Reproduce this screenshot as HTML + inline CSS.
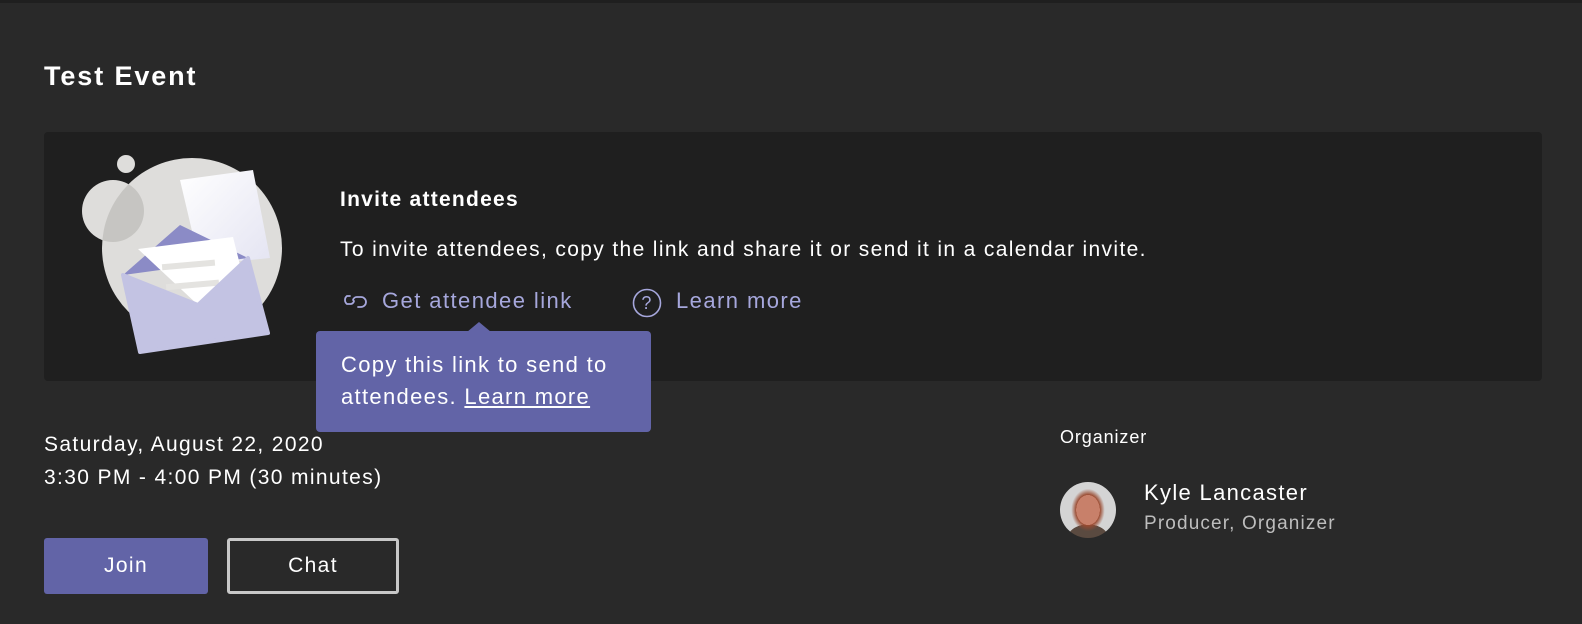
<!DOCTYPE html>
<html><head><style>
body{margin:0;width:1582px;height:624px;background:#292929;font-family:"Segoe UI","Liberation Sans",sans-serif;color:#fff;position:relative;overflow:hidden;letter-spacing:0.085em}
.top{position:absolute;left:0;top:0;width:1582px;height:3px;background:#1f1f1f}
.abs{position:absolute;white-space:nowrap}
.card{left:44px;top:132px;width:1498px;height:249px;background:#1f1f1f;border-radius:4px}
.lnk{color:#a6a7dc;font-size:22px;letter-spacing:0.065em}
.btn{height:56px;border-radius:3px;font-size:21px;display:flex;align-items:center;justify-content:center;box-sizing:border-box}
</style></head><body>
<div class="top"></div>
<div class="abs" style="left:44px;top:61px;font-size:27px;font-weight:bold;letter-spacing:0.07em">Test Event</div>
<div class="abs card"></div>
<svg class="abs" style="left:60px;top:140px" width="260" height="230" viewBox="0 0 260 230">
<defs><linearGradient id="g" x1="0" y1="0" x2="1" y2="1"><stop offset="0" stop-color="#fff"/><stop offset="1" stop-color="#e4e4f2"/></linearGradient>
<clipPath id="c"><circle cx="132" cy="108" r="90"/></clipPath></defs>
<circle cx="132" cy="108" r="90" fill="#dedddb"/>
<circle cx="66" cy="24" r="9" fill="#dedddb"/>
<circle cx="53" cy="71" r="31" fill="#dedddb"/>
<circle cx="53" cy="71" r="31" fill="#c6c5c2" clip-path="url(#c)"/>
<polygon points="120,40 193,30 210,118 140,125" fill="url(#g)"/>
<polygon points="63,135 120,85 188,118" fill="#8b8bc6"/>
<polygon points="78,109 173,97 180,125 138,165" fill="#fff"/>
<rect x="102" y="122" width="53" height="6" fill="#e4e3e0" transform="rotate(-5 128 125)"/>
<rect x="106" y="142" width="53" height="6" fill="#e4e3e0" transform="rotate(-5 132 145)"/>
<polygon points="63,135 138,165 188,118 208,193 80,212" fill="#c3c3e3" stroke="#c3c3e3" stroke-linejoin="round" stroke-width="4"/>
</svg>
<div class="abs" style="left:340px;top:188px;font-size:21px;font-weight:bold;letter-spacing:0.06em">Invite attendees</div>
<div class="abs" style="left:340px;top:238px;font-size:21px">To invite attendees, copy the link and share it or send it in a calendar invite.</div>
<svg class="abs" style="left:340px;top:290px" width="30" height="26" viewBox="0 0 30 26" fill="none" stroke="#a6a7dc" stroke-width="1.8" stroke-linecap="round"><path d="M10 6 L7 6 a5 5 0 0 0 0 8 h4 a4 4 0 0 0 3 -3 M13 10 a4 4 0 0 1 4 -3 h4 a5 5 0 0 1 0 10 h-3"/></svg>
<div class="abs lnk" style="left:382px;top:288px">Get attendee link</div>
<svg class="abs" style="left:632px;top:288px" width="30" height="30" viewBox="0 0 30 30" fill="none" stroke="#a6a7dc" stroke-width="1.6"><circle cx="15" cy="15" r="13.5"/><text x="15" y="21" fill="#a6a7dc" stroke="none" font-size="18" text-anchor="middle" font-family="Liberation Sans">?</text></svg>
<div class="abs lnk" style="left:676px;top:288px">Learn more</div>
<div class="abs" style="left:316px;top:331px;width:335px;height:101px;background:#6264a7;border-radius:4px"></div>
<div class="abs" style="left:467px;top:322px;width:0;height:0;border-left:12px solid transparent;border-right:12px solid transparent;border-bottom:10px solid #6264a7"></div>
<div class="abs" style="left:341px;top:349px;font-size:22px;line-height:32px;letter-spacing:0.06em">Copy this link to send to<br>attendees. <u>Learn more</u></div>
<div class="abs" style="left:44px;top:428px;font-size:21px;line-height:33px">Saturday, August 22, 2020<br>3:30 PM - 4:00 PM (30 minutes)</div>
<div class="abs btn" style="left:44px;top:538px;width:164px;background:#6264a7">Join</div>
<div class="abs btn" style="left:227px;top:538px;width:172px;border:3px solid #c8c8c8">Chat</div>
<div class="abs" style="left:1060px;top:427px;font-size:18px;letter-spacing:0.05em">Organizer</div>
<div class="abs" style="left:1060px;top:482px;width:56px;height:56px;border-radius:50%;background:radial-gradient(ellipse 30% 38% at 50% 50%,#c8806a 0 70%,#9a4a30 71%,transparent 100%),radial-gradient(ellipse 60% 40% at 50% 100%,#5a4a40 0 60%,transparent 61%),#d4d4d4"></div>
<div class="abs" style="left:1144px;top:480px;font-size:22px;letter-spacing:0.06em">Kyle Lancaster</div>
<div class="abs" style="left:1144px;top:513px;font-size:19px;color:#bdbdbd;letter-spacing:0.06em">Producer, Organizer</div>
</body></html>
